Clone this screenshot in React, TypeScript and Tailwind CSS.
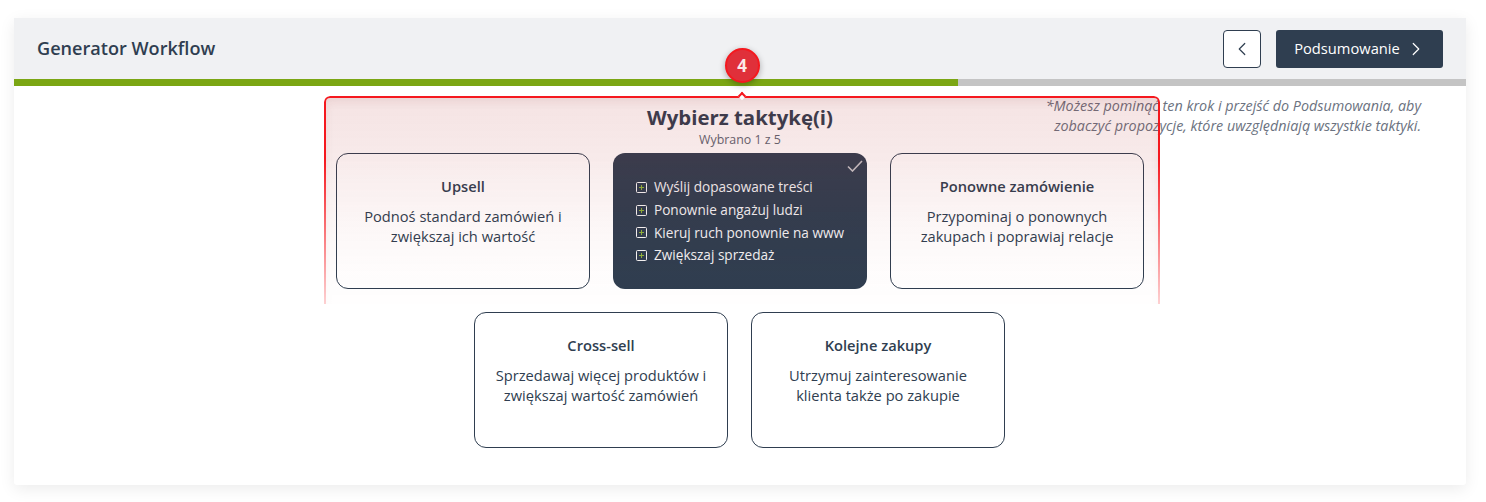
import { ChevronLeft, ChevronRight } from "lucide-react";

const features = [
  "Wyślij dopasowane treści",
  "Ponownie angażuj ludzi",
  "Kieruj ruch ponownie na www",
  "Zwiększaj sprzedaż",
];

function TacticCard({ title, text }: { title: string; text: string[] }) {
  return (
    <div className="w-[254px] h-[136px] rounded-[12px] border border-[#2f3e50] pt-[22px] px-3 text-center text-[#2f3e50]">
      <div className="text-[14.67px] leading-[20px] font-semibold">{title}</div>
      <div className="mt-[10px] text-[14.67px] leading-[20px]">
        {text.map((line) => (
          <div key={line}>{line}</div>
        ))}
      </div>
    </div>
  );
}

function PlusBox() {
  return (
    <svg width="11" height="11" viewBox="0 0 11 11" className="shrink-0">
      <rect x="0.5" y="0.5" width="10" height="10" rx="1" fill="none" stroke="#f4f4f4" />
      <path d="M5.5 3v5M3 5.5h5" stroke="#8fb339" strokeWidth="1" />
    </svg>
  );
}

function SelectedCard() {
  return (
    <div className="relative w-[254px] h-[136px] rounded-[12px] bg-[#2f3e50] pt-[23px] pl-[23px] text-white">
      <svg width="16" height="12" viewBox="0 0 16 12" className="absolute right-[4px] top-[7px]">
        <path d="M1 6.5l4.5 4.5L15 1" fill="none" stroke="#c4c4c8" strokeWidth="1.6" />
      </svg>
      {features.map((f) => (
        <div key={f} className="flex items-center gap-[7px] h-[22.7px] text-[13.6px] text-[#f1f1f3]">
          <PlusBox />
          <span>{f}</span>
        </div>
      ))}
    </div>
  );
}

export default function App() {
  return (
    <div className="h-[502px] bg-white pt-[18px] pl-[14px] pr-[20px] font-['Open_Sans',sans-serif]">
      <div className="relative h-[467px] rounded-b-[3px] bg-white shadow-[0_4px_16px_rgba(0,0,0,0.08)]">
        <div className="h-[61px] bg-[#f0f1f3] flex items-center justify-between pl-[23px] pr-[23px]">
          <h1 className="text-[18.1px] font-semibold text-[#2f3e50]">Generator Workflow</h1>
          <div className="flex items-center gap-[15px]">
            <button className="w-[38px] h-[38px] rounded-[4px] border border-[#2f3e50] bg-white flex items-center justify-center text-[#2f3e50]">
              <ChevronLeft size={22} strokeWidth={1.3} />
            </button>
            <button className="w-[167px] h-[38px] rounded-[3px] bg-[#2f3e50] flex items-center justify-center gap-[5px] pl-[2px] text-[14.7px] text-white">
              Podsumowanie
              <ChevronRight size={22} strokeWidth={1.3} />
            </button>
          </div>
        </div>

        <div className="h-[7px] flex bg-[#c4c4c4]">
          <div className="w-[944px] bg-[#7ba614]" />
        </div>

        <div className="grid grid-cols-3 pt-[11px] h-[67px]">
          <div />
          <div className="text-center">
            <h2 className="text-[20.4px] leading-[28px] mt-[6px] font-bold text-[#2f3e50]">Wybierz taktykę(i)</h2>
            <div className="text-[12.4px] leading-[16px] mt-[1px] text-[#5d6673]">Wybrano 1 z 5</div>
          </div>
          <div className="flex justify-end pr-[45px]">
            <p className="text-[14.35px] leading-[20px] italic text-[#6b7280] text-right whitespace-nowrap -mt-[1px]">
              *Możesz pominąć ten krok i przejść do Podsumowania, aby
              <br />
              zobaczyć propozycje, które uwzględniają wszystkie taktyki.
            </p>
          </div>
        </div>

        <div className="flex flex-col gap-[23px]">
          <div className="flex justify-center gap-[23px]">
            <TacticCard title="Upsell" text={["Podnoś standard zamówień i", "zwiększaj ich wartość"]} />
            <SelectedCard />
            <TacticCard title="Ponowne zamówienie" text={["Przypominaj o ponownych", "zakupach i poprawiaj relacje"]} />
          </div>
          <div className="flex justify-center gap-[23px] pr-[1px]">
            <TacticCard title="Cross-sell" text={["Sprzedawaj więcej produktów i", "zwiększaj wartość zamówień"]} />
            <TacticCard title="Kolejne zakupy" text={["Utrzymuj zainteresowanie", "klienta także po zakupie"]} />
          </div>
        </div>

        {/* tour highlight, sits over the cards */}
        <div className="absolute left-[310px] top-[78px] w-[836px] h-[208px] pointer-events-none rounded-t-[6px] border-2 border-b-0 border-[#f5181e] bg-gradient-to-b from-[rgba(178,40,40,0.13)] to-[rgba(178,40,40,0.02)] shadow-[inset_0_4px_8px_rgba(120,30,30,0.08),0_0_2px_rgba(245,24,30,0.5)] [mask-image:linear-gradient(to_bottom,black_30%,rgba(0,0,0,0.2)_100%)]" />
        <div className="absolute left-[724.5px] top-[75px] w-[6px] h-[6px] rotate-45 bg-white border-l-2 border-t-2 border-[#f5181e] pointer-events-none" />

        <div className="absolute left-[710.5px] top-[30px] w-[35px] h-[35px] rounded-full bg-[#e0303a] border-2 border-[#f5181e] shadow-[0_2px_6px_rgba(0,0,0,0.3)] flex items-center justify-center text-[17px] font-bold text-[#fbe9e9]">
          4
        </div>
      </div>
    </div>
  );
}
